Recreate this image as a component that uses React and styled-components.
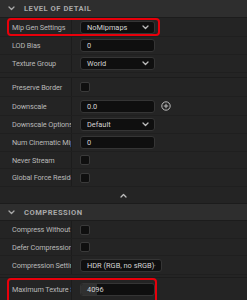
import styled, { createGlobalStyle } from "styled-components"

const GlobalStyle = createGlobalStyle`
  html, body {
    margin: 0;
    padding: 0;
    background: #1c1c1c;
  }
  body {
    font-family: Roboto, "Liberation Sans", sans-serif;
  }
  *, *::before, *::after {
    box-sizing: border-box;
  }
`

const Panel = styled.div`
  width: 247px;
  height: 300px;
  overflow: hidden;
  background: #242424;
  display: flex;
  flex-direction: column;
`

const CategoryHeader = styled.div`
  height: ${(p) => p.h || 17}px;
  flex: none;
  display: flex;
  align-items: center;
  gap: 9px;
  padding-left: 8px;
  background: #2e2e2e;
  border-bottom: 1px solid #1c1c1c;
  color: #a9a9a9;
  font-size: 7.6px;
  font-weight: 700;
  letter-spacing: 0.5px;
  text-transform: uppercase;
`

const Row = styled.div`
  position: relative;
  flex: none;
  height: ${(p) => p.h || 18}px;
  display: grid;
  grid-template-columns: 72px 1fr;
  border-bottom: 1px solid #1f1f1f;

  ${(p) =>
    p.highlight &&
    `
    &::after {
      content: "";
      position: absolute;
      left: 7px;
      top: 0;
      width: ${p.highlight}px;
      height: ${p.hlHeight || "100%"};
      border: 2.5px solid #e8000b;
      border-radius: 4px;
      pointer-events: none;
    }
  `}
`

const Label = styled.div`
  display: flex;
  align-items: center;
  padding-left: 12px;
  color: #b8b8b8;
  font-size: 7.3px;
  letter-spacing: -0.12px;
  white-space: nowrap;
  overflow: hidden;
  border-right: 1px solid #1c1c1c;
`

const Value = styled.div`
  display: flex;
  align-items: center;
  gap: 6px;
  padding-left: 8px;
`

const Field = styled.div`
  position: relative;
  width: ${(p) => p.w || 75}px;
  height: 13px;
  display: flex;
  align-items: center;
  justify-content: space-between;
  padding: 0 5px 0 6px;
  background: #0f0f0f;
  border: 1px solid #353535;
  border-radius: 3px;
  color: #d4d4d4;
  font-size: 7.4px;
  white-space: nowrap;
  overflow: hidden;
`

const Fill = styled.span`
  position: absolute;
  left: 0;
  top: 0;
  bottom: 0;
  background: #303030;
`

const FieldText = styled.span`
  position: relative;
`

const Check = styled.div`
  width: 10px;
  height: 10px;
  background: #0f0f0f;
  border: 1px solid #3a3a3a;
  border-radius: 2px;
`

const Divider = styled.div`
  flex: none;
  height: ${(p) => p.h}px;
  background: #242424;
  border-bottom: 1px solid #1c1c1c;
`

const ExpandRow = styled.div`
  flex: none;
  height: 17px;
  display: flex;
  align-items: center;
  justify-content: center;
  background: #242424;
  border-bottom: 1px solid #1c1c1c;
`

const Chevron = ({ up, color = "#bdbdbd" }) => (
  <svg width="7" height="5" viewBox="0 0 7 5">
    <path
      d={up ? "M1 4 L3.5 1.5 L6 4" : "M1 1 L3.5 3.5 L6 1"}
      fill="none"
      stroke={color}
      strokeWidth="1.3"
      strokeLinecap="round"
      strokeLinejoin="round"
    />
  </svg>
)

const PlusCircle = () => (
  <svg width="10" height="10" viewBox="0 0 10 10">
    <circle cx="5" cy="5" r="4.2" fill="none" stroke="#bdbdbd" strokeWidth="1" />
    <path d="M5 2.8 V7.2 M2.8 5 H7.2" stroke="#bdbdbd" strokeWidth="1" />
  </svg>
)

function Prop({ label, children, h, highlight, hlHeight }) {
  return (
    <Row h={h} highlight={highlight} hlHeight={hlHeight}>
      <Label>{label}</Label>
      <Value>{children}</Value>
    </Row>
  )
}

function Combo({ text, w }) {
  return (
    <Field w={w}>
      <FieldText>{text}</FieldText>
      <Chevron />
    </Field>
  )
}

export default function App() {
  return (
    <>
      <GlobalStyle />
      <Panel>
        <CategoryHeader h={18}>
          <Chevron color="#a9a9a9" />
          Level of Detail
        </CategoryHeader>
        <Prop label="Mip Gen Settings" h={19} highlight={153}>
          <Combo text="NoMipmaps" />
        </Prop>
        <Prop label="LOD Bias">
          <Field>
            <FieldText>0</FieldText>
          </Field>
        </Prop>
        <Prop label="Texture Group">
          <Combo text="World" />
        </Prop>
        <Divider h={5} />
        <Prop label="Preserve Border" h={19}>
          <Check />
        </Prop>
        <Prop label="Downscale" h={19}>
          <Field>
            <FieldText>0.0</FieldText>
          </Field>
          <PlusCircle />
        </Prop>
        <Prop label="Downscale Options">
          <Combo text="Default" />
        </Prop>
        <Prop label="Num Cinematic Mip Levels">
          <Field>
            <FieldText>0</FieldText>
          </Field>
        </Prop>
        <Prop label="Never Stream" h={17}>
          <Check />
        </Prop>
        <Prop label="Global Force Resident Mip Levels">
          <Check />
        </Prop>
        <ExpandRow>
          <Chevron up />
        </ExpandRow>
        <CategoryHeader>
          <Chevron color="#a9a9a9" />
          Compression
        </CategoryHeader>
        <Prop label="Compress Without Alpha">
          <Check />
        </Prop>
        <Prop label="Defer Compression" h={17}>
          <Check />
        </Prop>
        <Prop label="Compression Settings" h={19}>
          <Combo text="HDR (RGB, no sRGB)" w={82} />
        </Prop>
        <Divider h={3} />
        <Prop label="Maximum Texture Size" h={24} highlight={150} hlHeight="30px">
          <Field>
            <Fill style={{ width: `${(4096 / 16384) * 100 * 0.9}%` }} />
            <FieldText>4096</FieldText>
          </Field>
        </Prop>
      </Panel>
    </>
  )
}
